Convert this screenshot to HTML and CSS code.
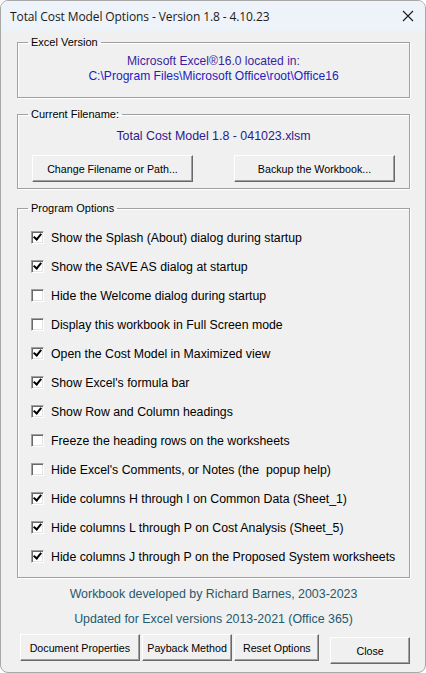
FILE: index.html
```html
<!DOCTYPE html>
<html>
<head>
<meta charset="utf-8">
<link rel="stylesheet" href="styles.css">
</head>
<body>
<div class="window">
  <div class="titlebar">
    <span class="title">Total Cost Model Options - Version 1.8 - 4.10.23</span>
    <svg class="close-x" width="12" height="12" viewBox="0 0 12 12"><path d="M1 1 L11 11 M11 1 L1 11" stroke="#1a1a1a" stroke-width="1.1" fill="none"/></svg>
  </div>
  <div class="content">
    <fieldset class="frame frame-excel">
      <legend>Excel Version</legend>
      <div class="excel-line1">Microsoft Excel®16.0 located in:</div>
      <div class="excel-line2">C:\Program Files\Microsoft Office\root\Office16</div>
    </fieldset>
    <fieldset class="frame frame-file">
      <legend>Current Filename:</legend>
      <div class="file-body">
        <div class="filename">Total Cost Model 1.8 - 041023.xlsm</div>
        <div class="file-buttons">
          <button class="btn btn-wide">Change Filename or Path...</button>
          <button class="btn btn-wide">Backup the Workbook...</button>
        </div>
      </div>
    </fieldset>
    <fieldset class="frame frame-options">
      <legend>Program Options</legend>
      <div class="options-body">
        <div class="opt"><span class="cb checked"></span><span>Show the Splash (About) dialog during startup</span></div>
        <div class="opt"><span class="cb checked"></span><span>Show the SAVE AS dialog at startup</span></div>
        <div class="opt"><span class="cb"></span><span>Hide the Welcome dialog during startup</span></div>
        <div class="opt"><span class="cb"></span><span>Display this workbook in Full Screen mode</span></div>
        <div class="opt"><span class="cb checked"></span><span>Open the Cost Model in Maximized view</span></div>
        <div class="opt"><span class="cb checked"></span><span>Show Excel's formula bar</span></div>
        <div class="opt"><span class="cb checked"></span><span>Show Row and Column headings</span></div>
        <div class="opt"><span class="cb"></span><span>Freeze the heading rows on the worksheets</span></div>
        <div class="opt"><span class="cb"></span><span>Hide Excel's Comments, or Notes (the&nbsp; popup help)</span></div>
        <div class="opt"><span class="cb checked"></span><span>Hide columns H through I on Common Data (Sheet_1)</span></div>
        <div class="opt"><span class="cb checked"></span><span>Hide columns L through P on Cost Analysis (Sheet_5)</span></div>
        <div class="opt"><span class="cb checked"></span><span>Hide columns J through P on the Proposed System worksheets</span></div>
      </div>
    </fieldset>
    <div class="credit credit1">Workbook developed by Richard Barnes, 2003-2023</div>
    <div class="credit credit2">Updated for Excel versions 2013-2021 (Office 365)</div>
    <div class="bottom-buttons">
      <button class="btn btn-doc">Document Properties</button>
      <button class="btn btn-payback">Payback Method</button>
      <button class="btn btn-reset">Reset Options</button>
      <button class="btn btn-close">Close</button>
    </div>
  </div>
</div>
</body>
</html>
```
FILE: styles.css
```css
html, body {
  margin: 0;
  padding: 0;
  background: #ffffff;
}
body {
  width: 426px;
  height: 673px;
  font-family: "Liberation Sans", Arial, sans-serif;
  font-size: 12.3px;
  color: #000;
}
.window {
  box-sizing: border-box;
  width: 426px;
  height: 673px;
  border: 1px solid #a8a8a8;
  border-radius: 8px;
  overflow: hidden;
  background: #f0f0f0;
  display: flex;
  flex-direction: column;
}
.titlebar {
  height: 30px;
  flex: 0 0 30px;
  background: #eef3f9;
  display: flex;
  align-items: center;
  justify-content: space-between;
  padding: 0 11px 0 9px;
}
.title {
  font-family: "Open Sans", "Noto Sans", sans-serif;
  font-size: 12px;
  color: #1a1a1a;
  letter-spacing: -0.1px;
}
.close-x {
  display: block;
}
.content {
  padding: 4px 15px 0 16px;
  display: flex;
  flex-direction: column;
}
.frame {
  margin: 0;
  padding: 0;
  border: 1px solid #a0a0a0;
  box-shadow: inset 1px 1px 0 #ffffff, 1px 1px 0 #ffffff;
  min-width: 0;
}
.frame legend {
  margin-left: 10px;
  padding: 0 3px;
  font-size: 11px;
  line-height: 14px;
}
.frame-excel {
  padding: 5px 0 13px;
  font-size: 12.1px;
}
.excel-line1 {
  text-align: center;
  line-height: 15px;
  color: #3a1f9e;
}
.excel-line2 {
  text-align: center;
  line-height: 15px;
  color: #2222c0;
}
.frame-file {
  margin-top: 9px;
}
.file-body {
  padding: 8px 14px 6px 14px;
}
.filename {
  text-align: center;
  font-size: 12.4px;
  line-height: 15px;
  color: #2d1a8c;
}
.file-buttons {
  margin-top: 11px;
  display: flex;
  justify-content: space-between;
}
.btn {
  box-sizing: border-box;
  height: 27px;
  padding: 0;
  font-family: "Liberation Sans", Arial, sans-serif;
  font-size: 10.7px;
  white-space: nowrap;
  color: #000;
  background: #f0f0f0;
  border: 1px solid;
  border-color: #ffffff #696969 #696969 #ffffff;
  box-shadow: inset -1px -1px 0 #a0a0a0;
  border-radius: 0;
}
.btn-wide {
  width: 161px;
}
.frame-options {
  margin-top: 12px;
}
.options-body {
  padding: 8px 0 6px 13px;
}
.opt {
  height: 29px;
  display: flex;
  align-items: center;
  gap: 7px;
}
.cb {
  box-sizing: border-box;
  width: 13px;
  height: 13px;
  flex: 0 0 13px;
  border: 1px solid;
  border-color: #a0a0a0 #ffffff #ffffff #a0a0a0;
  box-shadow: inset 1px 1px 0 #696969, inset -1px -1px 0 #e3e3e3;
  background: #ffffff;
  position: relative;
}
.cb.checked::after {
  content: "";
  position: absolute;
  left: 3px;
  top: 0px;
  width: 3px;
  height: 6px;
  border: solid #000;
  border-width: 0 2px 2px 0;
  transform: rotate(40deg);
  transform-origin: 50% 50%;
}
.credit {
  text-align: center;
  font-size: 12.4px;
  color: #27596c;
  line-height: 15px;
}
.credit1 {
  margin-top: 9px;
}
.credit2 {
  margin-top: 10px;
}
.bottom-buttons {
  margin-top: 7px;
  padding-left: 3px;
  display: flex;
  align-items: flex-start;
}
.btn-doc { width: 120px; }
.btn-payback { width: 91px; margin-left: 2px; }
.btn-reset { width: 85px; margin-left: 2px; }
.btn-close { width: 80px; margin-left: 11px; margin-top: 3px; }
```
